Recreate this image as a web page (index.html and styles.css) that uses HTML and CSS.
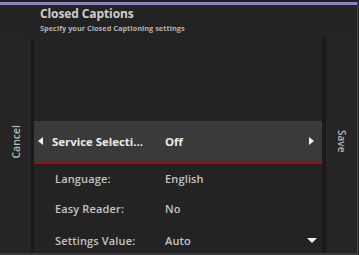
FILE: index.html
```html
<!DOCTYPE html>
<html lang="en">
<head>
  <meta charset="UTF-8" />
  <meta name="viewport" content="width=device-width, initial-scale=1" />
  <title>Closed Captions</title>
  <link rel="stylesheet" href="styles.css">
</head>
<body>

  <div class="screen">
    <header class="cc-header">
      <h1>Closed Captions</h1>
      <p>Specify your Closed Captioning settings</p>
    </header>

    <div class="cc-body">
      <div class="side side-left">
        <span class="side-label cancel">Cancel</span>
      </div>

      <div class="settings">
        <div class="row row-active">
          <span class="arrow-left"></span>
          <span class="row-label">Service Selecti...</span>
          <span class="row-value">Off</span>
          <span class="arrow-right"></span>
        </div>
        <div class="row row-first">
          <span class="row-label">Language:</span>
          <span class="row-value">English</span>
        </div>
        <div class="row">
          <span class="row-label">Easy Reader:</span>
          <span class="row-value">No</span>
        </div>
        <div class="row">
          <span class="row-label">Settings Value:</span>
          <span class="row-value">Auto</span>
          <span class="arrow-down"></span>
        </div>
      </div>

      <div class="side side-right">
        <span class="side-label save">Save</span>
      </div>
    </div>
  </div>

</body>
</html>
```

FILE: styles.css
```css
html, body {
  margin: 0;
  padding: 0;
  background: #232323;
}

body {
  font-family: "Open Sans", "DejaVu Sans", sans-serif;
  color: #c4c4c4;
}

.screen {
  width: 358px;
  height: 255px;
  box-sizing: border-box;
  border-top: 2px solid #1c1c22;
  border-right: 1px solid #4a4a4a;
  border-bottom: 2px solid #3a3a3a;
  background: #232323;
  display: flex;
  flex-direction: column;
  overflow: hidden;
}

.cc-header {
  border-top: 3px solid #8f86bd;
  padding: 1px 0 0 40px;
  height: 36px;
  flex-shrink: 0;
  box-sizing: border-box;
}

.cc-header h1 {
  margin: 0;
  font-size: 12px;
  font-weight: 700;
  line-height: 16px;
  color: #cfcfcf;
  letter-spacing: -0.1px;
}

.cc-header p {
  margin: 2px 0 0;
  font-size: 7.4px;
  font-weight: 700;
  line-height: 9px;
  color: #b2b2b2;
}

.cc-body {
  flex: 1;
  display: flex;
  min-height: 0;
}

.side {
  width: 31px;
  flex-shrink: 0;
  display: flex;
  align-items: center;
  justify-content: center;
  background: #252525;
}

.side-left {
  border-right: 3px solid #1a1a1a;
}

.side-right {
  border-left: 4px solid #1a1a1a;
}

.side-label {
  writing-mode: vertical-rl;
  font-size: 10.5px;
  font-weight: 600;
  color: #b8b8b8;
  margin-bottom: 8px;
}

.cancel {
  transform: rotate(180deg);
}

.save {
  font-size: 10px;
}

.settings {
  flex: 1;
  padding-top: 83px;
  display: flex;
  flex-direction: column;
  overflow: hidden;
}

.row {
  height: 32px;
  flex-shrink: 0;
  display: flex;
  align-items: center;
  padding-left: 21px;
  padding-right: 8px;
  font-size: 11px;
  font-weight: 600;
  letter-spacing: 0.15px;
}

.row-first {
  height: 28px;
}

.row-label {
  width: 110px;
}

.row-value {
  flex: 1;
}

.row-active {
  height: 40px;
  background: #3a3a3a;
  border-bottom: 3px solid #96101f;
  padding-left: 4px;
  font-size: 11.4px;
  font-weight: 700;
  letter-spacing: 0;
  color: #ececec;
}

.row-active .row-label {
  width: 113px;
}

.arrow-left {
  width: 0;
  height: 0;
  border-top: 4px solid transparent;
  border-bottom: 4px solid transparent;
  border-right: 5px solid #f0f0f0;
  margin-right: 9px;
}

.arrow-right {
  width: 0;
  height: 0;
  border-top: 4px solid transparent;
  border-bottom: 4px solid transparent;
  border-left: 5px solid #f0f0f0;
}

.arrow-down {
  width: 0;
  height: 0;
  border-left: 5px solid transparent;
  border-right: 5px solid transparent;
  border-top: 5px solid #f0f0f0;
  margin-right: -3px;
}
```
